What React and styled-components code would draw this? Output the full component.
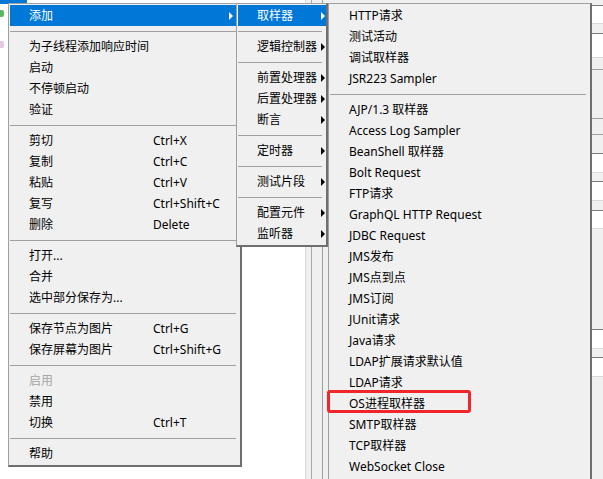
import React from 'react';
import styled, { createGlobalStyle } from 'styled-components';

const GlobalStyle = createGlobalStyle`
    html, body {
        margin: 0;
        padding: 0;
        overflow: hidden;
        background: #f0f0f0;
    }
    #root {
        width: 603px;
        height: 479px;
        position: relative;
        overflow: hidden;
        font-family: "Noto Sans", "Noto Sans CJK SC", sans-serif;
        font-size: 12px;
    }
`;

const mainMenu = [
    { label: '添加', sub: true, active: true },
    '-',
    { label: '为子线程添加响应时间' },
    { label: '启动' },
    { label: '不停顿启动' },
    { label: '验证' },
    '-',
    { label: '剪切', key: 'Ctrl+X' },
    { label: '复制', key: 'Ctrl+C' },
    { label: '粘贴', key: 'Ctrl+V' },
    { label: '复写', key: 'Ctrl+Shift+C' },
    { label: '删除', key: 'Delete' },
    '-',
    { label: '打开...' },
    { label: '合并' },
    { label: '选中部分保存为...' },
    '-',
    { label: '保存节点为图片', key: 'Ctrl+G' },
    { label: '保存屏幕为图片', key: 'Ctrl+Shift+G' },
    '-',
    { label: '启用', disabled: true },
    { label: '禁用' },
    { label: '切换', key: 'Ctrl+T' },
    '-',
    { label: '帮助' },
];

const addMenu = [
    { label: '取样器', sub: true, active: true },
    '-',
    { label: '逻辑控制器', sub: true },
    '-',
    { label: '前置处理器', sub: true },
    { label: '后置处理器', sub: true },
    { label: '断言', sub: true },
    '-',
    { label: '定时器', sub: true },
    '-',
    { label: '测试片段', sub: true },
    '-',
    { label: '配置元件', sub: true },
    { label: '监听器', sub: true },
];

const samplerMenu = [
    { label: 'HTTP请求' },
    { label: '测试活动' },
    { label: '调试取样器' },
    { label: 'JSR223 Sampler' },
    '-',
    { label: 'AJP/1.3 取样器' },
    { label: 'Access Log Sampler' },
    { label: 'BeanShell 取样器' },
    { label: 'Bolt Request' },
    { label: 'FTP请求' },
    { label: 'GraphQL HTTP Request' },
    { label: 'JDBC Request' },
    { label: 'JMS发布' },
    { label: 'JMS点到点' },
    { label: 'JMS订阅' },
    { label: 'JUnit请求' },
    { label: 'Java请求' },
    { label: 'LDAP扩展请求默认值' },
    { label: 'LDAP请求' },
    { label: 'OS进程取样器' },
    { label: 'SMTP取样器' },
    { label: 'TCP取样器' },
    { label: 'WebSocket Close' },
];

// right panel form fragments (only their right ends peek out past the menus)
const formParts = [
    { kind: 'field', gap: 5, h: 19 },
    { kind: 'field', gap: 9, h: 25 },
    { kind: 'rule', gap: 11 },
    { kind: 'rule', gap: 48 },
    { kind: 'rule', gap: 15 },
    { kind: 'field', gap: 18, h: 20 },
    { kind: 'field', gap: 8, h: 20 },
    { kind: 'field', gap: 9, h: 19 },
    { kind: 'field', gap: 100, h: 20 },
    { kind: 'field', gap: 8, h: 20 },
];

const PopupMenu = ({ items, left, width, labelWidth, arrowGap, open }) => (
    <Menu $left={left} $width={width} $open={open}>
        {items.map((item, i) =>
            item === '-' ? (
                <Separator key={i} />
            ) : (
                <Row key={i} $active={item.active} $disabled={item.disabled}>
                    <Label $width={labelWidth}>{item.label}</Label>
                    {item.key && <Shortcut>{item.key}</Shortcut>}
                    {item.sub && <Arrow $active={item.active} $gap={arrowGap} />}
                </Row>
            )
        )}
    </Menu>
);

const App = () => {
    return (
        <>
            <GlobalStyle />
            <Window>
                <TreePanel>
                    <SelectedNode />
                    <TreeIcon $color="#5cb85c" $gap={6} />
                    <TreeIcon $color="#e6c8e6" $gap={24} />
                </TreePanel>
                <Splitter>
                    <SplitLine />
                </Splitter>
                <FormPanel>
                    {formParts.map((p, i) =>
                        p.kind === 'field' ? (
                            <Field key={i} $gap={p.gap} $h={p.h} />
                        ) : (
                            <Rule key={i} $gap={p.gap} />
                        )
                    )}
                </FormPanel>
            </Window>

            <PopupMenu items={mainMenu} left={8} width={234} labelWidth={124} arrowGap={7} />
            <PopupMenu items={addMenu} left={236} width={92} arrowGap={1} />
            {/* the sampler list runs on past the bottom of the screen */}
            <PopupMenu items={samplerMenu} left={328} width={264} open />

            <Highlight />
        </>
    );
};

export default App;

const Window = styled.div`
    display: flex;
    width: 603px;
    height: 479px;
    background: #f0f0f0;
`;

const TreePanel = styled.div`
    width: 305px;
    flex-shrink: 0;
    display: flex;
    flex-direction: column;
    background: #fff;
`;

const SelectedNode = styled.div`
    width: 27px;
    height: 4px;
    background: #0078d7;
`;

const TreeIcon = styled.div`
    width: 4px;
    height: 7px;
    margin-top: ${({ $gap }) => $gap}px;
    background: ${({ $color }) => $color};
    border-radius: 0 2px 2px 0;
`;

const Splitter = styled.div`
    width: 18px;
    flex-shrink: 0;
    display: flex;
    justify-content: center;
    border-left: 1px solid #d6d6d6;
    border-right: 1px solid #a0a0a0;
    box-sizing: border-box;
    padding-right: 6px;
`;

const SplitLine = styled.div`
    width: 1px;
    background: #a9a9a9;
`;

const FormPanel = styled.div`
    flex: 1;
    display: flex;
    flex-direction: column;
    padding-left: 40px;
`;

const Field = styled.div`
    box-sizing: border-box;
    height: ${({ $h }) => $h}px;
    margin-top: ${({ $gap }) => $gap}px;
    background: #fff;
    border-top: 1px solid #7a7a7a;
    border-bottom: 1px solid #d9d9d9;
    border-left: 1px solid #a0a0a0;
`;

const Rule = styled.div`
    height: 1px;
    margin-top: ${({ $gap }) => $gap}px;
    background: #a0a0a0;
`;

const Menu = styled.div`
    position: absolute;
    top: 3px;
    left: ${({ $left }) => $left}px;
    width: ${({ $width }) => $width}px;
    box-sizing: border-box;
    display: flex;
    flex-direction: column;
    padding: 1px 0 ${({ $open }) => ($open ? '40px' : '1px')} 1px;
    background: #f0f0f0;
    border: 1px solid #a0a0a0;
    border-right: 2px solid #6f6f6f;
    border-bottom: 2px solid #6f6f6f;
`;

const Row = styled.div`
    display: flex;
    align-items: center;
    height: 21px;
    padding-left: 19px;
    white-space: nowrap;
    line-height: 21px;
    background: ${({ $active }) => ($active ? '#0078d7' : 'transparent')};
    color: ${({ $active, $disabled }) => ($active ? '#fff' : $disabled ? '#a6a6a6' : '#000')};
`;

const Label = styled.span`
    width: ${({ $width }) => ($width ? `${$width}px` : 'auto')};
    flex-shrink: 0;
`;

const Shortcut = styled.span`
    color: inherit;
`;

const Arrow = styled.span`
    margin-left: auto;
    margin-right: ${({ $gap }) => $gap}px;
    width: 0;
    height: 0;
    border-top: 4px solid transparent;
    border-bottom: 4px solid transparent;
    border-left: 4px solid ${({ $active }) => ($active ? '#fff' : '#000')};
`;

const Separator = styled.div`
    height: 10px;
    display: flex;
    align-items: center;
    margin-right: 4px;

    &::before {
        content: '';
        flex: 1;
        height: 1px;
        background: #a0a0a0;
    }
`;

const Highlight = styled.div`
    position: absolute;
    left: 327px;
    top: 390px;
    width: 144px;
    height: 23px;
    box-sizing: border-box;
    border: 3px solid #f0262a;
    border-radius: 3px;
`;
